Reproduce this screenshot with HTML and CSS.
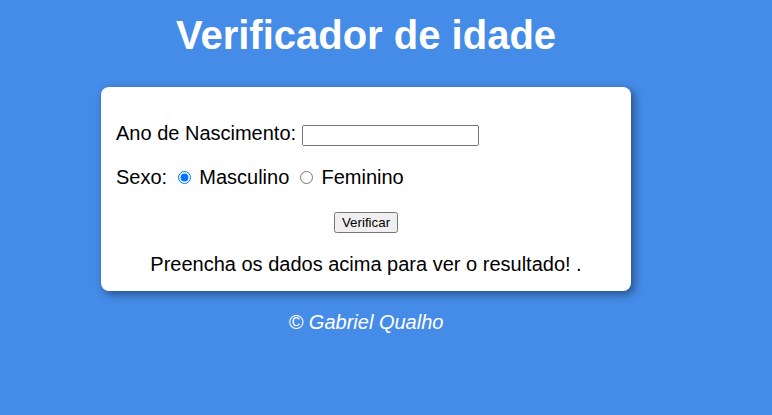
FILE: index.html
```html
<!DOCTYPE html>
<html lang="pt-BR">
<head>
<meta charset="utf-8">
<title>Verificador de idade</title>
<link rel="stylesheet" href="styles.css">
</head>
<body>
<div class="page">
  <header class="header">
    <h1 class="title">Verificador de idade</h1>
  </header>
  <section class="card">
    <p class="row">
      <label for="txtano">Ano de Nascimento:</label>
      <input type="text" id="txtano" class="field">
    </p>
    <p class="row">
      Sexo:
      <input type="radio" name="sexo" id="mas" class="radio" checked> <label for="mas">Masculino</label>
      <input type="radio" name="sexo" id="fem" class="radio"> <label for="fem">Feminino</label>
    </p>
    <p class="row center">
      <input type="button" value="Verificar" class="btn">
    </p>
    <div class="result">Preencha os dados acima para ver o resultado! .</div>
  </section>
  <footer class="footer">
    <p class="credit">&copy; Gabriel Qualho</p>
  </footer>
</div>
</body>
</html>
```

FILE: styles.css
```css
html, body {
  margin: 0;
  padding: 0;
}
body {
  background: #458ce8;
  font-family: "Liberation Sans", Arial, sans-serif;
  font-size: 20px;
  color: #000;
}
.page {
  width: 732px;
  padding-top: 13px;
}
.header {
  color: #fff;
  text-align: center;
}
.title {
  font-size: 40px;
  font-weight: bold;
  margin: 0 0 29px 0;
}
.card {
  width: 500px;
  margin: 0 auto;
  padding: 15px;
  background: #fff;
  border-radius: 8px;
  box-shadow: 3px 3px 10px rgba(0, 0, 0, 0.45);
}
.row {
  margin: 20px 0;
}
.center {
  text-align: center;
}
.field {
  box-sizing: border-box;
  width: 177px;
  height: 21px;
  font-family: "Liberation Sans", Arial, sans-serif;
  font-size: 13.33px;
}
.radio {
  margin: 3px 3px 0 5px;
}
.btn {
  font-family: "Liberation Sans", Arial, sans-serif;
  font-size: 13.33px;
}
.result {
  margin-top: 20px;
  text-align: center;
}
.footer {
  text-align: center;
  color: #fff;
}
.credit {
  margin: 20px 0;
  font-style: italic;
}
```
